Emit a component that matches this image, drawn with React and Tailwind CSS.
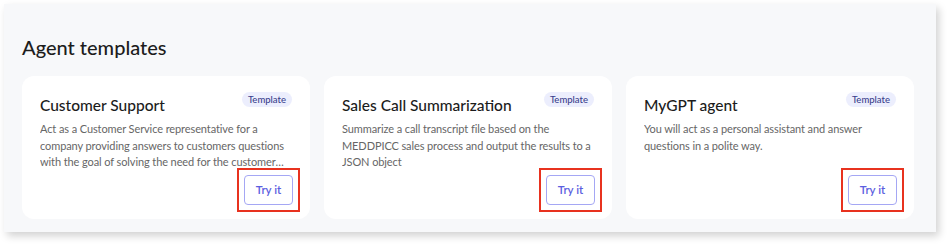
const templates = [
    {
        title: "Customer Support",
        description:
            "Act as a Customer Service representative for a company providing answers to customers questions with the goal of solving the need for the customer and making sure they are satisfied with the answer.",
    },
    {
        title: "Sales Call Summarization",
        description:
            "Summarize a call transcript file based on the MEDDPICC sales process and output the results to a JSON object",
    },
    {
        title: "MyGPT agent",
        description: "You will act as a personal assistant and answer questions in a polite way.",
    },
];

function TemplateCard({ title, description }) {
    return (
        <div className="bg-white rounded-xl pt-[17px] pl-[18px] pr-[18px] pb-[7px] flex flex-col h-[143px]">
            <div className="flex items-start justify-between gap-2">
                <h3 className="text-[15.5px] leading-[22px] font-medium text-[#1c1c1c] mt-[1px]">{title}</h3>
                <span className="shrink-0 rounded-full bg-[#eceefd] text-[#3a3f8c] text-[9.5px] leading-[15px] px-[6px] mt-[-1px] font-medium">
                    Template
                </span>
            </div>
            <p className="mt-[5px] text-[11px] tracking-[-0.1px] leading-[16.5px] text-[#666] line-clamp-3">{description}</p>
            <div className="mt-auto flex justify-end -mr-[8px]">
                <div className="border-2 border-[#e8321f] p-[5px]">
                    <button className="w-[49px] h-[30px] rounded-[4px] border border-[#a5a7f4] text-[#5b5ee0] text-[11.5px] font-semibold">
                        Try it
                    </button>
                </div>
            </div>
        </div>
    );
}

export default function App() {
    return (
        <div className="w-[952px] h-[247px] bg-white pt-[4px] pl-[4px]" style={{ fontFamily: 'Lato, "Noto Sans", sans-serif' }}>
            <div className="w-[932px] h-[228px] bg-[#f7f8fa] shadow-[3px_4px_8px_rgba(0,0,0,0.18)] pl-[18px] pr-[22px] pt-[30px]">
                <h2 className="text-[20px] leading-[26px] font-medium text-[#1c1c1c]">Agent templates</h2>
                <div className="mt-[16px] grid grid-cols-3 gap-[14px]">
                    {templates.map((t) => (
                        <TemplateCard key={t.title} {...t} />
                    ))}
                </div>
            </div>
        </div>
    );
}
